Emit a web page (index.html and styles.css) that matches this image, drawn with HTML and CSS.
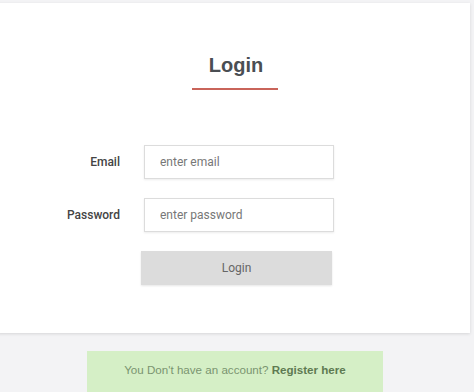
FILE: index.html
```html
<!DOCTYPE html>
<html>
<head>
<meta charset="utf-8">
<link rel="stylesheet" href="styles.css">
</head>
<body>
<div class="card">
  <h1 class="title">Login</h1>
  <div class="rule"></div>
  <form class="form">
    <label class="label" for="email">Email</label>
    <input class="input" id="email" type="text" placeholder="enter email">
    <label class="label" for="pw">Password</label>
    <input class="input" id="pw" type="password" placeholder="enter password">
    <span></span>
    <button class="btn" type="button">Login</button>
  </form>
</div>
<div class="footer">
  <div class="notice">You Don't have an account? <b>Register here</b></div>
</div>
</body>
</html>
```

FILE: styles.css
```css
html, body {
  margin: 0;
  padding: 0;
  background: #f3f3f5;
  font-family: "Liberation Sans", Arial, sans-serif;
  height: 392px;
  overflow: hidden;
}
.card {
  background: #fff;
  margin: 3px 4px 0 -2px;
  height: 330px;
  box-shadow: 0 1px 3px rgba(0,0,0,0.12);
  display: flex;
  flex-direction: column;
  align-items: center;
}
.title {
  margin: 50px 0 0 4px;
  font-size: 20px;
  font-weight: bold;
  color: #4a4e53;
  line-height: 24px;
}
.rule {
  width: 86px;
  height: 2px;
  background: #c9645a;
  margin-top: 11px;
  margin-left: 2px;
}
.form {
  align-self: flex-start;
  margin: 55px 0 0 2px;
  display: grid;
  grid-template-columns: 120px 190px;
  column-gap: 24px;
  row-gap: 19px;
  align-items: center;
}
.label {
  text-align: right;
  font-family: Roboto, "Liberation Sans", sans-serif;
  font-weight: 500;
  font-size: 12px;
  color: #444;
}
.input {
  box-sizing: border-box;
  width: 190px;
  height: 34px;
  border: 1px solid #dcdcdc;
  box-shadow: 0 1px 2px rgba(0,0,0,0.08);
  padding: 0 15px;
  font-family: Roboto, "Liberation Sans", sans-serif;
  font-size: 12px;
  color: #333;
  outline: none;
  margin: 0;
}
.input::placeholder {
  color: #777;
}
.btn {
  box-sizing: border-box;
  width: 191px;
  height: 34px;
  margin: 0 0 0 -3px;
  border: none;
  background: #dcdcdc;
  box-shadow: 0 1px 2px rgba(0,0,0,0.1);
  font-family: Roboto, "Liberation Sans", sans-serif;
  font-size: 12px;
  color: #666;
}
.footer {
  display: flex;
  justify-content: center;
  padding-top: 18px;
}
.notice {
  box-sizing: border-box;
  width: 296px;
  margin-left: -4px;
  height: 50px;
  background: #d5efc6;
  padding-top: 12px;
  text-align: center;
  font-size: 11.6px;
  color: #7a9470;
}
.notice b {
  color: #5e7a52;
}
```
